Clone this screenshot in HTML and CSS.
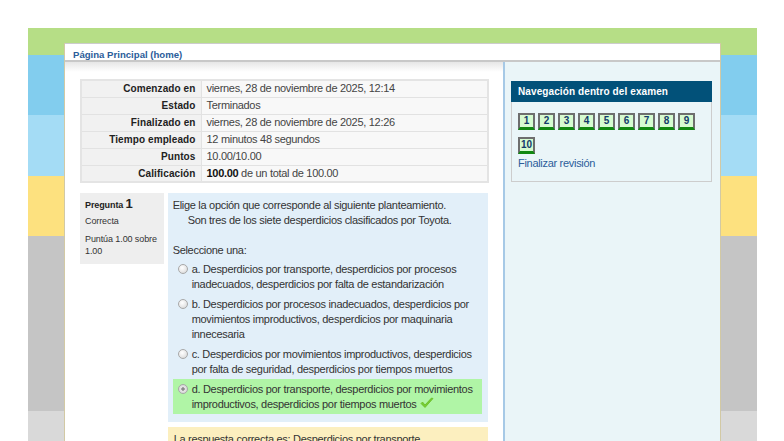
FILE: index.html
```html
<!DOCTYPE html>
<html>
<head>
	<title>Revisión del examen</title>
	<meta name="viewport" content="width=device-width,initial-scale=1">
	<link rel="stylesheet" href="styles.css">
</head>
<body>

	<div class="outer">
		<div class="page">
			<div class="navbar">
				<a href="#">Página Principal (home)</a>
			</div>
			<div class="content">
				<div class="main">
					<table class="summary">
						<tr><th>Comenzado en</th><td>viernes, 28 de noviembre de 2025, 12:14</td></tr>
						<tr><th>Estado</th><td>Terminados</td></tr>
						<tr><th>Finalizado en</th><td>viernes, 28 de noviembre de 2025, 12:26</td></tr>
						<tr><th>Tiempo empleado</th><td>12 minutos 48 segundos</td></tr>
						<tr><th>Puntos</th><td>10.00/10.00</td></tr>
						<tr><th>Calificación</th><td><b>100.00</b> de un total de 100.00</td></tr>
					</table>

					<div class="que">
						<div class="info">
							<h3>Pregunta <span class="qno">1</span></h3>
							<div class="state">Correcta</div>
							<div class="grade">Puntúa 1.00 sobre 1.00</div>
						</div>
						<div class="qbody">
							<div class="formulation">
								<p class="qtext">Elige la opción que corresponde al siguiente planteamiento.<br>
								<span class="indent">Son tres de los siete desperdicios clasificados por Toyota.</span></p>
								<p class="prompt">Seleccione una:</p>
								<div class="answers">
									<div class="ans">
										<span class="radio"></span>
										<span class="label">a. Desperdicios por transporte, desperdicios por procesos inadecuados, desperdicios por falta de estandarización</span>
									</div>
									<div class="ans">
										<span class="radio"></span>
										<span class="label">b. Desperdicios por procesos inadecuados, desperdicios por movimientos improductivos, desperdicios por maquinaria innecesaria</span>
									</div>
									<div class="ans">
										<span class="radio"></span>
										<span class="label">c. Desperdicios por movimientos improductivos, desperdicios por falta de seguridad, desperdicios por tiempos muertos</span>
									</div>
									<div class="ans correct">
										<span class="radio checked"></span>
										<span class="label">d. Desperdicios por transporte, desperdicios por movimientos improductivos, desperdicios por tiempos muertos
											<svg class="tick" width="14" height="12" viewBox="0 0 14 12"><path d="M1 6.5 L5 10.5 L13 1.5 L11.5 1 L5 8 L2.5 5 Z" fill="#77cc33" stroke="#66bb22" stroke-width="0.8" stroke-linejoin="round"/></svg>
										</span>
									</div>
								</div>
							</div>
							<div class="feedback">
								La respuesta correcta es: Desperdicios por transporte, desperdicios por movimientos improductivos, desperdicios por tiempos muertos
							</div>
						</div>
					</div>
				</div>

				<div class="side">
					<div class="block">
						<div class="block-head">Navegación dentro del examen</div>
						<div class="block-body">
							<div class="qnbuttons">
								<a class="qnbtn" href="#">1</a>
								<a class="qnbtn" href="#">2</a>
								<a class="qnbtn" href="#">3</a>
								<a class="qnbtn" href="#">4</a>
								<a class="qnbtn" href="#">5</a>
								<a class="qnbtn" href="#">6</a>
								<a class="qnbtn" href="#">7</a>
								<a class="qnbtn" href="#">8</a>
								<a class="qnbtn" href="#">9</a>
								<a class="qnbtn" href="#">10</a>
							</div>
							<a class="finish" href="#">Finalizar revisión</a>
						</div>
					</div>
				</div>
			</div>
		</div>
	</div>

</body>
</html>
```

FILE: styles.css
```css
*{
	box-sizing: border-box;
	padding: 0;
	margin: 0;
}

body{
	font-family: "Liberation Sans", Arial, sans-serif;
	font-size: 11px;
	letter-spacing: -0.3px;
	color: #333;
	background: #fff;
	height: 441px;
	overflow: hidden;
}

.outer{
	margin: 28px 27px 0 28px;
	height: 413px;
	padding: 15px 36px 0 36px;
	background: linear-gradient(to bottom,
		#b6de86 0, #b6de86 27px,
		#82cdee 27px, #82cdee 87px,
		#a4dcf5 87px, #a4dcf5 148px,
		#fde17f 148px, #fde17f 208px,
		#c5c5c5 208px, #c5c5c5 383px,
		#d9d9d9 383px);
}

.page{
	height: 100%;
	display: flex;
	flex-direction: column;
	border-left: 1px solid #d2c9a4;
	border-right: 1px solid #d2c9a4;
}

.navbar{
	height: 23px;
	background: #fff;
	border-top: 1px solid #ccc;
	border-bottom: 2px solid #c8c8c8;
	padding: 4px 0 0 8px;
}
.navbar a{
	color: #2b5d9a;
	font-weight: bold;
	font-size: 9.6px;
	letter-spacing: 0;
	text-decoration: none;
}

.content{
	flex: 1;
	display: flex;
}

.main{
	width: 438px;
	padding: 17px 15px 0 15px;
	background: linear-gradient(to bottom, #e6e6e6 0, #fff 10px);
}

.summary{
	width: 409px;
	border-collapse: collapse;
	border: 2px solid #e4e4e4;
	background: #f1f1f1;
}
.summary th, .summary td{
	height: 17px;
	padding: 0 5px;
	border: 1px solid #e2e2e2;
	line-height: 15px;
}
.summary th{
	width: 120px;
	text-align: right;
	color: #222;
	font-size: 10px;
	letter-spacing: 0.1px;
}
.summary td{
	background: #f8f8f8;
	color: #444;
	font-size: 11px;
}
.summary td b{
	color: #111;
}

.que{
	display: flex;
	gap: 4px;
	margin-top: 10px;
}

.info{
	width: 84px;
	height: 71px;
	background: #eee;
	padding: 5px 5px 0 5px;
	font-size: 9px;
	letter-spacing: -0.1px;
	line-height: 12px;
	color: #333;
}
.info h3{
	font-size: 9px;
	font-weight: bold;
	color: #222;
	margin-bottom: 4px;
}
.info .qno{
	font-size: 13px;
}
.info .state{
	margin-bottom: 6px;
}

.qbody{
	width: 322px;
}

.formulation{
	background: #e2eff9;
	padding: 5px 6px 8px 5px;
	line-height: 15px;
	color: #333;
}
.qtext .indent{
	padding-left: 15px;
}
.prompt{
	margin-top: 15px;
	margin-bottom: 4px;
}

.ans{
	display: flex;
	align-items: flex-start;
	padding: 0 4px 0 5px;
	margin-bottom: 5px;
}
.ans .radio{
	flex: none;
	width: 10px;
	height: 10px;
	margin: 2px 4px 0 0;
	border-radius: 50%;
	border: 1px solid #a8a8a8;
	background: radial-gradient(circle at 40% 35%, #fff 0, #e8e8e8 55%, #cfcfcf 100%);
}
.ans .radio.checked{
	background: radial-gradient(circle, #8a8a8a 0, #8a8a8a 25%, #e6e6e6 35%, #cfcfcf 100%);
}
.ans.correct{
	background: #b0f5a6;
	padding-top: 3px;
	padding-bottom: 2px;
	margin-top: -3px;
	margin-bottom: 0;
}
.tick{
	vertical-align: -1px;
	margin-left: 1px;
}

.feedback{
	margin-top: 5px;
	background: #fcefbf;
	padding: 5px 6px;
	line-height: 15px;
	color: #333;
}

.side{
	flex: 1;
	background: #eaf5f8;
	border-left: 2px solid #a6c9e6;
	padding: 19px 8px 0 6px;
}

.block-head{
	background: #025179;
	color: #fff;
	font-weight: bold;
	font-size: 10px;
	letter-spacing: 0.1px;
	height: 21px;
	line-height: 21px;
	padding-left: 7px;
}
.block-body{
	border: 1px solid #cdcdcd;
	border-top: none;
	padding: 11px 6px 12px 6px;
}

.qnbuttons{
	display: flex;
	flex-wrap: wrap;
	gap: 7px 3px;
	width: 186px;
}
.qnbtn{
	display: block;
	min-width: 17px;
	height: 17px;
	padding: 0 1px;
	background: #d6fbd0;
	border: 2px solid #6e6e6e;
	border-bottom: 3px solid #118811;
	color: #123a6a;
	font-weight: bold;
	font-size: 10px;
	letter-spacing: 0;
	line-height: 12px;
	text-align: center;
	text-decoration: none;
}

.finish{
	display: block;
	margin-top: 3px;
	color: #2b5d9a;
	font-size: 11px;
	text-decoration: none;
}
```
